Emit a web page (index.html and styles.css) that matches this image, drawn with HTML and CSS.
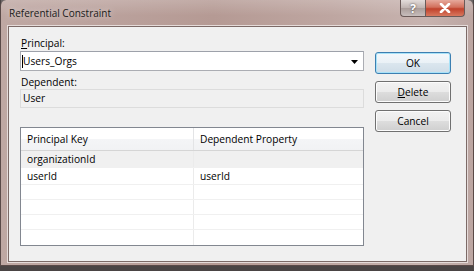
FILE: index.html
```
<!DOCTYPE html>
<html>
<head>
<meta charset="utf-8">
<link rel="stylesheet" href="styles.css">
</head>
<body>
<div class="window">
  <div class="titlebar">
    <span class="title">Referential Constraint</span>
    <div class="caption-buttons">
      <div class="cbtn help">?</div>
      <div class="cbtn close">
        <svg width="14" height="10" viewBox="0 0 14 10"><path d="M3 1 L11 9 M11 1 L3 9" stroke="#fff" stroke-width="2.6" stroke-linecap="round"/></svg>
      </div>
    </div>
  </div>
  <div class="client">
    <div class="left">
      <div class="label"><u>P</u>rincipal:</div>
      <div class="combo">
        <span class="caret"></span><span class="combo-text">Users_Orgs</span>
        <svg class="arrow" width="7" height="4" viewBox="0 0 7 4"><path d="M0 0 H7 L3.5 4 Z" fill="#000"/></svg>
      </div>
      <div class="label dep-label">Dependent:</div>
      <div class="readonly">User</div>
      <div class="grid">
        <div class="row head">
          <div class="cell c1">Principal Key</div>
          <div class="cell c2">Dependent Property</div>
        </div>
        <div class="row sel">
          <div class="cell c1">organizationId</div>
          <div class="cell c2"></div>
        </div>
        <div class="row">
          <div class="cell c1">userId</div>
          <div class="cell c2">userId</div>
        </div>
        <div class="row"><div class="cell c1"></div><div class="cell c2"></div></div>
        <div class="row"><div class="cell c1"></div><div class="cell c2"></div></div>
        <div class="row"><div class="cell c1"></div><div class="cell c2"></div></div>
        <div class="row last"><div class="cell c1"></div><div class="cell c2"></div></div>
      </div>
    </div>
    <div class="buttons">
      <div class="btn default">OK</div>
      <div class="btn"><u>D</u>elete</div>
      <div class="btn">Cancel</div>
    </div>
  </div>
</div>
</body>
</html>
```
FILE: styles.css
```
html, body {
  margin: 0;
  padding: 0;
  background: #4a4444;
}
body {
  width: 474px;
  height: 271px;
  overflow: hidden;
  font-family: "Open Sans", "Noto Sans", sans-serif;
  font-size: 10.2px;
  color: #000;
}
.window {
  width: 474px;
  height: 266px;
  box-sizing: border-box;
  padding: 0 6px 3px 7px;
  background: linear-gradient(90deg, #bfa8a3 0%, #bba29d 20%, #b59a94 45%, #bea6a1 70%, #c7b3af 90%, #bca6a2 100%);
  border-radius: 6px 6px 0 0;
  border: 1px solid #5a4a48;
  border-top: none;
  display: flex;
  flex-direction: column;
}
.titlebar {
  height: 26px;
  display: flex;
  align-items: flex-start;
  justify-content: space-between;
  background: linear-gradient(rgba(255,255,255,0.18), rgba(255,255,255,0) 60%);
  margin: 0 -6px 0 -7px;
  padding: 0 6px 0 7px;
}
.title {
  margin-top: 6px;
  margin-left: 1px;
  font-size: 10px;
  color: #1a1a1a;
  text-shadow: 0 0 6px rgba(255,255,255,0.7);
}
.caption-buttons {
  display: flex;
  margin-right: 2px;
}
.cbtn {
  height: 17px;
  box-sizing: border-box;
  border: 1px solid #6a5a58;
  border-top: none;
  display: flex;
  align-items: center;
  justify-content: center;
}
.help {
  width: 25px;
  border-radius: 0 0 0 4px;
  background: linear-gradient(#e3dcda, #bfb3b0 50%, #aa9d9a 52%, #c8bebc);
  color: #fff;
  font-weight: bold;
  font-size: 12px;
  text-shadow: 0 0 2px #333;
  border-right: none;
}
.close {
  width: 40px;
  border-radius: 0 0 4px 0;
  background: linear-gradient(#e6a99c, #d2705c 45%, #c0422c 55%, #d8785e);
}
.client {
  flex: 1;
  background: #f0f0f0;
  border: 1px solid #7c6a67;
  box-shadow: 0 0 0 1px #e6dcda;
  display: flex;
  padding: 9px 15px 0 11px;
  gap: 11px;
}
.left {
  width: 345px;
  display: flex;
  flex-direction: column;
}
.label {
  height: 14px;
  line-height: 14px;
  margin-bottom: 1px;
  padding-left: 1px;
}
.dep-label {
  margin-top: 4px;
  margin-bottom: 0;
}
.combo {
  height: 20px;
  box-sizing: border-box;
  background: #fff;
  border: 1px solid #abadb3;
  border-top-color: #9da1aa;
  display: flex;
  align-items: center;
  padding-left: 1px;
  position: relative;
}
.caret {
  width: 1px;
  height: 13px;
  background: #000;
}
.combo-text {
  line-height: 14px;
}
.arrow {
  position: absolute;
  right: 5px;
  top: 8px;
}
.readonly {
  height: 19px;
  box-sizing: border-box;
  border: 1px solid #dcdcdc;
  background: #f0f0f0;
  padding-left: 2px;
  line-height: 17px;
}
.grid {
  margin-top: 19px;
  height: 119px;
  box-sizing: border-box;
  border: 1px solid #828790;
  background: #fff;
  display: flex;
  flex-direction: column;
}
.row {
  display: flex;
  height: 17px;
  box-sizing: border-box;
  border-bottom: 1px solid #f0f0f0;
}
.row.last {
  border-bottom: none;
}
.row.head {
  height: 23px;
  background: linear-gradient(#ffffff, #ffffff 50%, #f4f5f7 51%, #f1f2f4);
  border-bottom: 1px solid #d5d5d5;
}
.row.head .cell {
  line-height: 22px;
  border-right-color: #e3e4e6;
}
.row.sel {
  background: #f0f0f0;
  border-bottom-color: #f0f0f0;
}
.cell {
  line-height: 16px;
  padding-left: 6px;
  box-sizing: border-box;
}
.c1 {
  width: 173px;
  border-right: 1px solid #ebebeb;
}
.c2 {
  flex: 1;
}
.buttons {
  display: flex;
  flex-direction: column;
  gap: 7px;
  padding-top: 16px;
}
.btn {
  width: 76px;
  height: 22px;
  box-sizing: border-box;
  border: 1px solid #707070;
  border-radius: 3px;
  background: linear-gradient(#f2f2f2, #ebebeb 50%, #dddddd 51%, #cfcfcf);
  display: flex;
  align-items: center;
  justify-content: center;
  box-shadow: inset 0 0 0 1px #fcfcfc;
}
.btn.default {
  border-color: #3c7fb1;
  background: linear-gradient(#f4f8fb, #eaf1f6 50%, #dbe6ee 51%, #cfdde8);
  box-shadow: inset 0 0 0 1px #a8e2f8;
}
```
